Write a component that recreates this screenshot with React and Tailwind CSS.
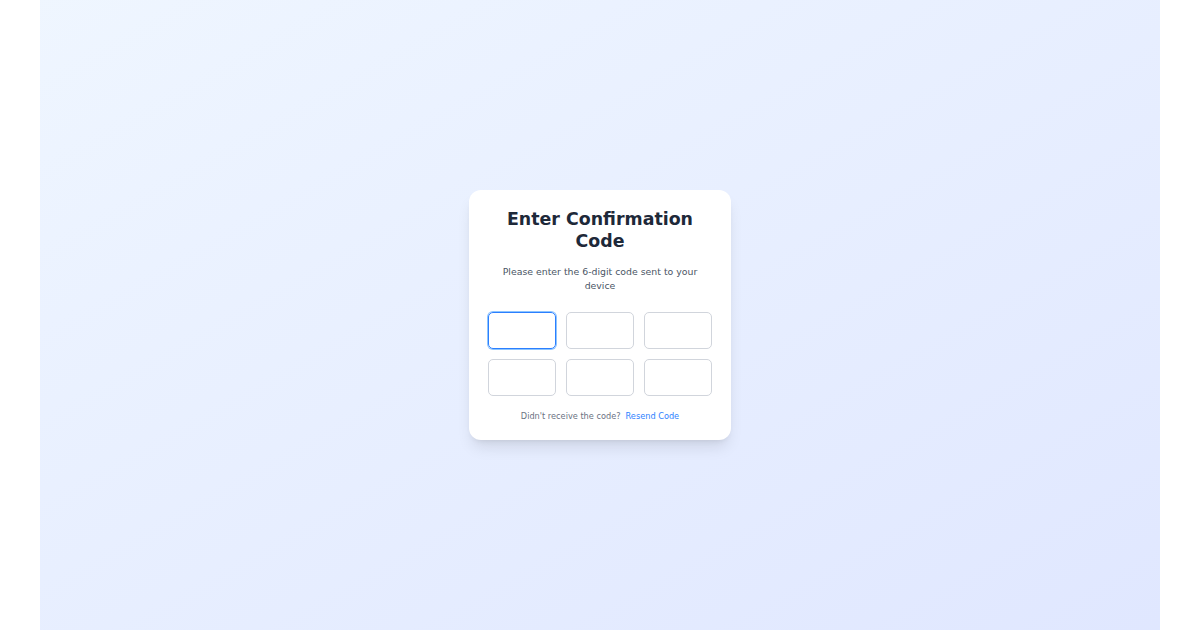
export default function App() {
  const digits = [0, 1, 2, 3, 4, 5];

  return (
    <div className="bg-white" style={{ fontFamily: '"DejaVu Sans", sans-serif' }}>
      <div className="mx-10 min-h-screen flex items-center justify-center bg-gradient-to-br from-blue-50 to-indigo-100">
        <div className="w-[262px] bg-white rounded-xl shadow-lg px-[19px] pt-[19px] pb-[17.5px]">
          <h1 className="text-[17.4px] leading-[21.5px] font-bold text-gray-800 text-center">
            Enter Confirmation Code
          </h1>
          <p className="mt-[13px] text-[9.35px] leading-[14px] text-gray-600 text-center">
            Please enter the 6-digit code sent to your device
          </p>

          {/* Code inputs */}
          <div className="mt-[18.5px] grid grid-cols-3 gap-x-[10px] gap-y-[9.5px]">
            {digits.map((d) => (
              <input
                key={d}
                type="text"
                maxLength={1}
                className={`h-[37.5px] w-full rounded-[5px] border text-center outline-none ${
                  d === 0 ? 'border-blue-500 ring-1 ring-blue-300' : 'border-gray-300'
                }`}
              />
            ))}
          </div>

          <div className="mt-[14px] flex items-center justify-center gap-[5px] text-[8.2px] leading-[12px]">
            <span className="text-gray-500">Didn't receive the code?</span>
            <button className="text-blue-500">Resend Code</button>
          </div>
        </div>
      </div>
    </div>
  );
}
